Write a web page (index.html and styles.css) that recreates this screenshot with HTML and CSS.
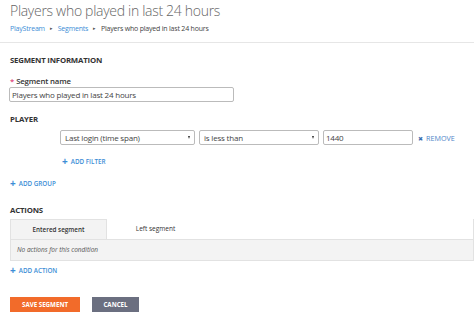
FILE: index.html
```html
<!DOCTYPE html>
<html lang="en">
<head>
  <meta charset="UTF-8">
  <title>Players who played in last 24 hours</title>
  <link rel="stylesheet" href="styles.css">
</head>
<body>
  <div class="page-header">
    <h1>Players who played in last 24 hours</h1>
    <div class="crumbs">
      <a href="#">PlayStream</a><span class="sep">&#9656;</span><a href="#">Segments</a><span class="sep">&#9656;</span><span>Players who played in last 24 hours</span>
    </div>
  </div>

  <div class="content">
    <h2>SEGMENT INFORMATION</h2>
    <label class="field-label"><span class="req">*</span>Segment name</label>
    <input class="text-input name-input" type="text" value="Players who played in last 24 hours">

    <h2 class="player-title">PLAYER</h2>
    <div class="filter-row">
      <div class="select sel-prop">Last login (time span)<span class="caret"></span></div>
      <div class="select sel-op">is less than<span class="caret"></span></div>
      <input class="text-input value-input" type="text" value="1440">
      <a href="#" class="remove"><span class="x">&#10006;</span>REMOVE</a>
    </div>
    <a href="#" class="link add-filter"><span class="plus">+</span>ADD FILTER</a>
    <a href="#" class="link add-group"><span class="plus">+</span>ADD GROUP</a>

    <h2 class="actions-title">ACTIONS</h2>
    <div class="tabs">
      <div class="tab-bar">
        <div class="tab active">Entered segment</div>
        <div class="tab">Left segment</div>
      </div>
      <div class="tab-body">No actions for this condition</div>
    </div>
    <a href="#" class="link add-action"><span class="plus">+</span>ADD ACTION</a>

    <div class="buttons">
      <a href="#" class="btn btn-save">SAVE SEGMENT</a>
      <a href="#" class="btn btn-cancel">CANCEL</a>
    </div>
  </div>
</body>
</html>
```

FILE: styles.css
```css
body {
  font-family: "Open Sans", "Noto Sans", sans-serif;
  margin: 0;
  padding: 0;
  background-color: white;
  color: #333;
  font-size: 8px;
}
a {
  text-decoration: none;
}
.page-header {
  padding: 0 10px;
  height: 42px;
  border-bottom: 1px solid #e6e6e6;
}
h1 {
  margin: 0;
  font-size: 14px;
  line-height: 22px;
  font-weight: 300;
  letter-spacing: -0.3px;
  color: #666;
}
.crumbs {
  line-height: 12px;
  font-size: 7px;
  letter-spacing: -0.2px;
  color: #444;
}
.crumbs a {
  color: #3c8dd6;
}
.sep {
  font-size: 5px;
  margin: 0 5px;
  color: #555;
  vertical-align: 1px;
}
.content {
  padding: 0 10px;
}
h2 {
  margin: 11px 0 0;
  font-size: 7.8px;
  line-height: 12px;
  font-weight: 700;
  letter-spacing: -0.2px;
  color: #333;
}
.field-label {
  display: block;
  margin-top: 9px;
  line-height: 12px;
  font-size: 7.8px;
  font-weight: 600;
  letter-spacing: -0.15px;
  color: #333;
}
.req {
  color: #e0457b;
  margin-right: 2px;
}
.text-input {
  font-family: inherit;
  font-size: 8px;
  letter-spacing: -0.2px;
  color: #444;
  border: 1px solid #bbb;
  border-radius: 2px;
  height: 15px;
  padding: 0 2px;
  box-sizing: border-box;
  margin: 0;
  outline: none;
}
.name-input {
  display: block;
  width: 225px;
  margin-left: -1px;
}
.player-title {
  margin-top: 11px;
}
.filter-row {
  display: flex;
  align-items: center;
  gap: 4px;
  margin-top: 5px;
  padding-left: 50px;
}
.select {
  position: relative;
  height: 15px;
  box-sizing: border-box;
  border: 1px solid #bbb;
  border-radius: 2px;
  padding-left: 4px;
  line-height: 13px;
  letter-spacing: -0.2px;
  color: #444;
}
.sel-prop {
  width: 135px;
}
.sel-op {
  width: 120px;
}
.caret {
  position: absolute;
  right: 4px;
  top: 5px;
  width: 0;
  height: 0;
  border-left: 1.5px solid transparent;
  border-right: 1.5px solid transparent;
  border-top: 3px solid #333;
}
.value-input {
  width: 90px;
}
.remove {
  margin-left: 1px;
  color: #4f86c8;
  font-size: 7.2px;
}
.x {
  color: #3c6fb0;
  margin-right: 3px;
  font-size: 5.5px;
}
.link {
  color: #3c8dd6;
  font-size: 6.3px;
  font-weight: 600;
}
.plus {
  font-size: 10px;
  font-weight: 700;
  margin-right: 3px;
  vertical-align: -1px;
}
.add-filter {
  display: block;
  width: max-content;
  margin: 9px 0 0 52px;
  line-height: 14px;
}
.add-group {
  display: block;
  width: max-content;
  margin-top: 7px;
  line-height: 14px;
}
.actions-title {
  margin-top: 13px;
}
.tabs {
  margin-top: 3px;
  margin-right: -10px;
  border: 1px solid #e2e2e2;
  border-left: none;
  border-top: none;
}
.tab-bar {
  display: flex;
}
.tab {
  width: 97px;
  height: 20px;
  line-height: 20px;
  text-align: center;
  color: #333;
  font-size: 6.5px;
  box-sizing: border-box;
}
.tab.active {
  background-color: #f3f3f3;
  border: 1px solid #e2e2e2;
  border-bottom: none;
  font-weight: 600;
  font-size: 6.3px;
}
.tab-body {
  background-color: #f3f3f3;
  border: 1px solid #e2e2e2;
  border-right: none;
  border-bottom: none;
  height: 20px;
  line-height: 20px;
  padding-left: 6px;
  font-style: italic;
  font-size: 6.5px;
  color: #555;
}
.add-action {
  display: block;
  width: max-content;
  margin-top: 2px;
  line-height: 14px;
}
.buttons {
  display: flex;
  gap: 12px;
  margin-top: 19px;
}
.btn {
  display: inline-block;
  height: 15px;
  line-height: 15px;
  color: white;
  font-size: 6.2px;
  font-weight: 700;
  text-align: center;
}
.btn-save {
  width: 70px;
  background-color: #f26b2a;
}
.btn-cancel {
  width: 47px;
  background-color: #6b6f80;
}
```
